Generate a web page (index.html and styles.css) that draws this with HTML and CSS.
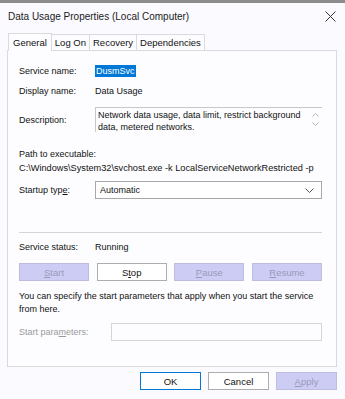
FILE: index.html
```html
<!DOCTYPE html>
<html lang="en">
<head>
<meta charset="UTF-8">
<title>Data Usage Properties (Local Computer)</title>
<link rel="stylesheet" href="styles.css">
</head>
<body>
<div class="window">
  <div class="titlebar">
    <span class="title">Data Usage Properties (Local Computer)</span>
    <svg class="close" width="11" height="11" viewBox="0 0 11 11"><path d="M0.5 0.5 L10.5 10.5 M10.5 0.5 L0.5 10.5" stroke="#333" stroke-width="1"/></svg>
  </div>

  <div class="tabs">
    <div class="tab active">General</div>
    <div class="tab">Log On</div>
    <div class="tab">Recovery</div>
    <div class="tab">Dependencies</div>
  </div>

  <div class="panel">
    <div class="row row-name">
      <span class="label">Service name:</span>
      <span class="value"><span class="selected">DusmSvc</span></span>
    </div>
    <div class="row row-display">
      <span class="label">Display name:</span>
      <span class="value">Data Usage</span>
    </div>
    <div class="row row-desc">
      <span class="label">Description:</span>
      <div class="textbox">
        <div class="desc-text">Network data usage, data limit, restrict background data, metered networks.</div>
        <div class="scroll">
          <svg width="7" height="4" viewBox="0 0 7 4"><path d="M0.5 3.5 L3.5 0.5 L6.5 3.5" fill="none" stroke="#b5b5b5"/></svg>
          <svg width="7" height="4" viewBox="0 0 7 4"><path d="M0.5 0.5 L3.5 3.5 L6.5 0.5" fill="none" stroke="#b5b5b5"/></svg>
        </div>
      </div>
    </div>

    <div class="path">
      <div>Path to executable:</div>
      <div class="path-value">C:\Windows\System32\svchost.exe -k LocalServiceNetworkRestricted -p</div>
    </div>

    <div class="row row-startup">
      <span class="label">Startup typ<u>e</u>:</span>
      <div class="select">
        <span>Automatic</span>
        <svg width="9" height="5" viewBox="0 0 9 5"><path d="M0.5 0.5 L4.5 4.5 L8.5 0.5" fill="none" stroke="#555" stroke-width="1"/></svg>
      </div>
    </div>

    <div class="separator"></div>

    <div class="row row-status">
      <span class="label">Service status:</span>
      <span class="value">Running</span>
    </div>

    <div class="actions">
      <button class="btn disabled"><u>S</u>tart</button>
      <button class="btn">S<u>t</u>op</button>
      <button class="btn disabled"><u>P</u>ause</button>
      <button class="btn disabled"><u>R</u>esume</button>
    </div>

    <p class="hint">You can specify the start parameters that apply when you start the service from here.</p>

    <div class="row row-params">
      <span class="label muted">Start para<u>m</u>eters:</span>
      <div class="input"></div>
    </div>
  </div>

  <div class="footer">
    <button class="btn default">OK</button>
    <button class="btn">Cancel</button>
    <button class="btn disabled"><u>A</u>pply</button>
  </div>
</div>
</body>
</html>
```

FILE: styles.css
```css
body {
  margin: 0;
  background: #fafaff;
  font-family: "Liberation Sans", Arial, sans-serif;
  font-size: 9px;
  color: #111;
}
.window {
  width: 345px;
  height: 399px;
  border-top: 3px solid #8c8c8c;
  box-sizing: border-box;
  display: flex;
  flex-direction: column;
}
.titlebar {
  height: 26px;
  padding: 0 9px 0 8px;
  display: flex;
  justify-content: space-between;
  align-items: center;
  font-size: 10px;
  color: #222;
}
.tabs {
  display: flex;
  margin: 5px 0 0 8px;
  height: 16px;
  align-items: flex-end;
  font-size: 9.5px;
}
.tab {
  height: 15px;
  line-height: 15px;
  padding: 0 3px;
  border: 1px solid #d9d9e0;
  border-bottom: none;
  border-left: none;
  background: #fcfcff;
}
.tab.active {
  height: 17px;
  line-height: 17px;
  padding: 0 4px;
  border-left: 1px solid #d9d9e0;
  margin-bottom: -1px;
  position: relative;
  z-index: 1;
  background: #fdfdff;
}
.panel {
  margin: 0 8px 0 7px;
  height: 317px;
  box-sizing: border-box;
  border: 1px solid #d9d9e0;
  background: #fdfdff;
  padding: 12px 14px 0 11px;
  display: flex;
  flex-direction: column;
}
.row {
  display: flex;
  align-items: center;
}
.label {
  width: 76px;
  flex-shrink: 0;
}
.muted {
  color: #9a9a9a;
  width: 92px;
}
.selected {
  background: #0078d7;
  color: #fff;
  padding: 1px 1px;
}
.row-name,
.row-display,
.row-status {
  height: 16px;
}
.row-display {
  margin-top: 4px;
}
.row-desc {
  margin-top: 8px;
}
.textbox {
  flex: 1;
  height: 25px;
  box-sizing: border-box;
  border-top: 1px solid #c8c8c8;
  border-left: 1px solid #c8c8c8;
  display: flex;
  padding: 1px 0 0 2px;
  line-height: 12px;
}
.desc-text {
  flex: 1;
}
.scroll {
  width: 14px;
  display: flex;
  flex-direction: column;
  align-items: center;
  justify-content: space-around;
  padding: 2px 0 4px;
}
.path {
  margin-top: 15px;
  line-height: 14px;
}
.path-value {
  white-space: nowrap;
  font-size: 9.2px;
}
.row-startup {
  margin-top: 6px;
}
.select {
  flex: 1;
  height: 18px;
  box-sizing: border-box;
  border: 1px solid #a8a8a8;
  background: #fff;
  display: flex;
  align-items: center;
  justify-content: space-between;
  padding: 0 7px 0 4px;
}
.separator {
  margin-top: 33px;
  height: 1px;
  background: #d6d6d6;
}
.row-status {
  margin-top: 6px;
}
.actions {
  margin-top: 8px;
  display: flex;
  justify-content: space-between;
}
.btn {
  width: 70px;
  height: 18px;
  box-sizing: border-box;
  border: 1px solid #adadad;
  background: #fff;
  font-family: inherit;
  font-size: 9.5px;
  color: #111;
  padding: 0;
}
.btn.disabled {
  background: #ccccf4;
  border-color: #bdbde0;
  color: #9a9ab8;
}
.btn.default {
  border: 1px solid #0078d7;
}
.hint {
  margin: 9px 0 0;
  line-height: 13px;
}
.row-params {
  margin-top: 7px;
}
.input {
  flex: 1;
  height: 18px;
  box-sizing: border-box;
  border: 1px solid #d6d6d6;
}
.footer {
  display: flex;
  justify-content: flex-end;
  gap: 7px;
  padding: 5px 8px 0 0;
}
.footer .btn {
  width: 61px;
}
```
